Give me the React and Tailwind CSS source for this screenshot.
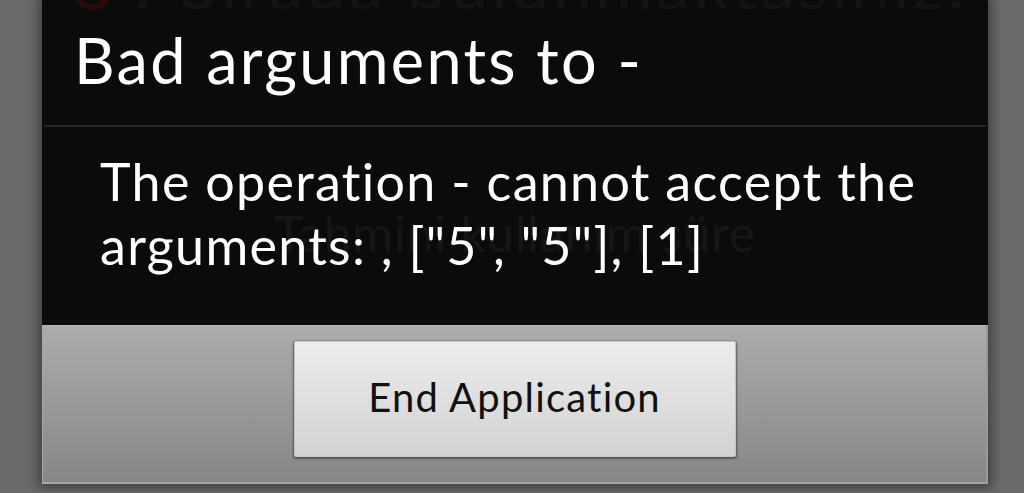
export default function App() {
  return (
    <div className="w-[1024px] h-[493px] overflow-hidden bg-[#6a6a6a] flex [font-variant-ligatures:none]" style={{ fontFamily: 'Lato, "Noto Sans", sans-serif' }}>
      <div className="relative ml-[42px] w-[946px] h-[484px] flex flex-col shadow-[0_0_10px_4px_rgba(40,40,40,0.6)]">
        {/* dark content area */}
        <div className="relative h-[325px] flex-none bg-[#0b0b0b] flex flex-col overflow-hidden">
          {/* page behind the dialog, barely visible */}
          <div className="absolute left-[33px] top-[-20px] w-[35px] h-[30px] rounded-full border-[6px] border-[#2a0a0a]"></div>
          <div className="absolute left-[92px] top-[-53px] text-[#131313] text-[70px] leading-none tracking-[2px]">:</div>
          <div className="absolute left-[138px] top-[-53px] text-[#131313] text-[70px] leading-none tracking-[3px]">
            Sırada bulunmaktasınız.
          </div>
          <div className="absolute left-[232px] top-[208px] text-[#161616] text-[50px] leading-none tracking-[0.5px]">
            Tahmini kullanım süre
          </div>

          <div className="relative h-[125px] flex-none pl-[32px] pt-[20px] text-white text-[63px] leading-[80px] tracking-[2.3px]">
            Bad arguments to -
          </div>
          <div className="relative h-[2px] mx-[2px] bg-[#262626]"></div>
          <div className="relative pl-[58px] pt-[22px] text-white text-[52px] leading-[64px] tracking-[1.3px] pr-[20px]">
            The operation - cannot accept the arguments: , ["5", "5"], [1]
          </div>
        </div>
        {/* button bar */}
        <div className="flex-1 bg-linear-to-b from-[#acacac] to-[#878787] border-t border-l border-r-2 border-b-2 border-t-[#b8b8b8] border-l-[#a8a8a8] border-r-[#9a9a9a] border-b-[#a5a5a5] flex justify-center pt-[15px]">
          <button className="w-[442px] h-[116px] rounded-[2px] bg-linear-to-b from-[#ececec] to-[#d2d2d2] border border-[#c4c4c4] shadow-[0_1px_2px_1px_rgba(60,60,60,0.7)] text-[#111] text-[40px] leading-none tracking-[1.2px] flex items-center justify-center pb-[4px]">
            End Application
          </button>
        </div>
      </div>
    </div>
  );
}
